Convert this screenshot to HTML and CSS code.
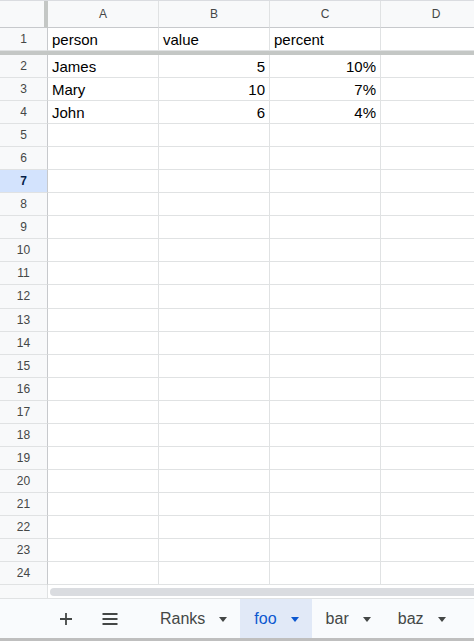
FILE: index.html
```html
<!DOCTYPE html>
<html>
<head>
<meta charset="utf-8">
<link rel="stylesheet" href="styles.css">
</head>
<body>
<div class="app">
  <div class="sheet">
    <div class="grid">
      <div class="hd corner"></div>
      <div class="hd col">A</div>
      <div class="hd col">B</div>
      <div class="hd col">C</div>
      <div class="hd col">D</div>

      <div class="rh">1</div>
      <div class="c">person</div>
      <div class="c">value</div>
      <div class="c">percent</div>
      <div class="c"></div>
    </div>
    <div class="freeze"></div>
    <div class="grid body" id="body">
      <div class="rh">2</div><div class="c">James</div><div class="c n">5</div><div class="c n">10%</div><div class="c"></div>
      <div class="rh">3</div><div class="c">Mary</div><div class="c n">10</div><div class="c n">7%</div><div class="c"></div>
      <div class="rh">4</div><div class="c">John</div><div class="c n">6</div><div class="c n">4%</div><div class="c"></div>
      <div class="rh">5</div><div class="c"></div><div class="c"></div><div class="c"></div><div class="c"></div>
      <div class="rh">6</div><div class="c"></div><div class="c"></div><div class="c"></div><div class="c"></div>
      <div class="rh sel">7</div><div class="c"></div><div class="c"></div><div class="c"></div><div class="c"></div>
      <div class="rh">8</div><div class="c"></div><div class="c"></div><div class="c"></div><div class="c"></div>
      <div class="rh">9</div><div class="c"></div><div class="c"></div><div class="c"></div><div class="c"></div>
      <div class="rh">10</div><div class="c"></div><div class="c"></div><div class="c"></div><div class="c"></div>
      <div class="rh">11</div><div class="c"></div><div class="c"></div><div class="c"></div><div class="c"></div>
      <div class="rh">12</div><div class="c"></div><div class="c"></div><div class="c"></div><div class="c"></div>
      <div class="rh">13</div><div class="c"></div><div class="c"></div><div class="c"></div><div class="c"></div>
      <div class="rh">14</div><div class="c"></div><div class="c"></div><div class="c"></div><div class="c"></div>
      <div class="rh">15</div><div class="c"></div><div class="c"></div><div class="c"></div><div class="c"></div>
      <div class="rh">16</div><div class="c"></div><div class="c"></div><div class="c"></div><div class="c"></div>
      <div class="rh">17</div><div class="c"></div><div class="c"></div><div class="c"></div><div class="c"></div>
      <div class="rh">18</div><div class="c"></div><div class="c"></div><div class="c"></div><div class="c"></div>
      <div class="rh">19</div><div class="c"></div><div class="c"></div><div class="c"></div><div class="c"></div>
      <div class="rh">20</div><div class="c"></div><div class="c"></div><div class="c"></div><div class="c"></div>
      <div class="rh">21</div><div class="c"></div><div class="c"></div><div class="c"></div><div class="c"></div>
      <div class="rh">22</div><div class="c"></div><div class="c"></div><div class="c"></div><div class="c"></div>
      <div class="rh">23</div><div class="c"></div><div class="c"></div><div class="c"></div><div class="c"></div>
      <div class="rh">24</div><div class="c"></div><div class="c"></div><div class="c"></div><div class="c"></div>
    </div>
    <div class="scrollrow">
      <div class="scroll-corner"></div>
      <div class="scroll-track"><div class="thumb"></div></div>
    </div>
  </div>
  <div class="tabbar">
    <div class="btn">
      <svg width="14" height="14" viewBox="0 0 14 14"><path d="M7 1v12M1 7h12" stroke="#444746" stroke-width="1.8" fill="none"/></svg>
    </div>
    <div class="btn">
      <svg width="16" height="14" viewBox="0 0 16 14"><path d="M0.5 2h15M0.5 7h15M0.5 12h15" stroke="#444746" stroke-width="1.8" fill="none"/></svg>
    </div>
    <div class="tabs">
      <div class="tab"><span>Ranks</span><span class="arr"></span></div>
      <div class="tab active"><span>foo</span><span class="arr"></span></div>
      <div class="tab"><span>bar</span><span class="arr"></span></div>
      <div class="tab"><span>baz</span><span class="arr"></span></div>
    </div>
  </div>
</div>
</body>
</html>
```
FILE: styles.css
```css
* { box-sizing: border-box; }
html, body { margin: 0; padding: 0; }
body {
  width: 474px;
  height: 641px;
  overflow: hidden;
  background: #fff;
  font-family: Arial, "Liberation Sans", sans-serif;
}
.app { width: 474px; height: 641px; display: flex; flex-direction: column; overflow: hidden; }
.sheet { border-top: 1px solid #dadce0; }
.grid {
  display: grid;
  grid-template-columns: 48px 111px 111px 111px 111px;
  width: 492px;
}
.hd {
  height: 27px;
  background: #f8f9fa;
  border-right: 1px solid #e0e2e3;
  border-bottom: 1px solid #c7c9cc;
  font-size: 12px;
  color: #444746;
  display: flex;
  align-items: center;
  justify-content: center;
}
.corner { border-right: 4px solid #c4c7c5; }
.rh {
  height: 23px;
  background: #f8f9fa;
  border-right: 1px solid #c7c9cc;
  border-bottom: 1px solid #e0e2e3;
  font-size: 12px;
  color: #444746;
  display: flex;
  align-items: center;
  justify-content: center;
}
.body .rh, .body .c { height: 23.05px; }
.rh.sel { background: #d3e3fd; color: #041e49; font-weight: bold; }
.c {
  height: 23px;
  border-right: 1px solid #e0e2e3;
  border-bottom: 1px solid #e0e2e3;
  font-size: 15px;
  color: #000;
  padding: 0 4px;
  display: flex;
  align-items: center;
  white-space: nowrap;
}
.c.n { justify-content: flex-end; }
.freeze { height: 4px; background: #c4c7c5; width: 474px; }
.scrollrow {
  display: flex;
  height: 14px;
  border-bottom: 1px solid #e0e2e3;
}
.scroll-corner { width: 48px; border-right: 1px solid #e0e2e3; background: #f8f9fa; }
.scroll-track { flex: 1; padding: 3px 0 2px 2px; }
.thumb { height: 100%; background: #dadce0; border-radius: 5px 0 0 5px; }
.tabbar {
  flex: 1;
  display: flex;
  align-items: stretch;
  background: #f9fbfd;
  padding-left: 44px;
  border-bottom: 3px solid #bfbfbf;
}
.btn { width: 44px; display: flex; align-items: center; justify-content: center; }
.tabs { display: flex; margin-left: 14px; }
.tab {
  display: flex;
  align-items: center;
  padding: 0 13px 0 14px;
  gap: 14px;
  font-size: 16px;
  color: #444746;
  font-family: Arial, "Liberation Sans", sans-serif;
}
.tab.active { background: #e1e9f7; color: #0b57d0; }
.arr {
  width: 0; height: 0;
  border-left: 4px solid transparent;
  border-right: 4px solid transparent;
  border-top: 5px solid #444746;
  margin-top: 1px;
}
.tab.active .arr { border-top-color: #0b57d0; }
```
